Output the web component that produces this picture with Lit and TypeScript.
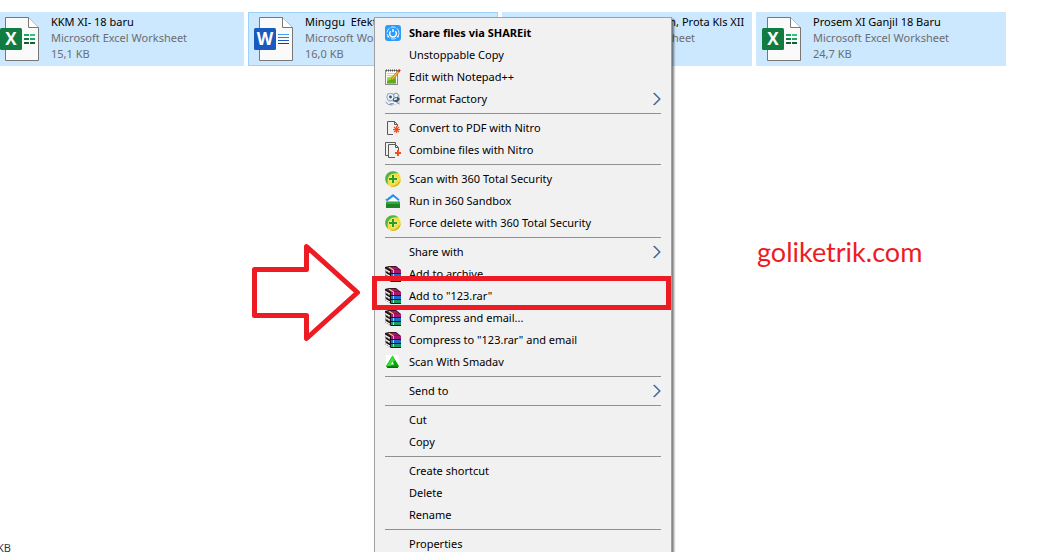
import { LitElement, html, css, svg, nothing } from "lit";
import { customElement, property } from "lit/decorators.js";

type IconName =
  | "shareit" | "notepad" | "factory" | "pdf" | "combine"
  | "security" | "sandbox" | "rar" | "smadav";

interface Entry {
  label: string;
  icon?: IconName;
  bold?: boolean;
  submenu?: boolean;
  marked?: boolean;
}

const groups: Entry[][] = [
  [
    { label: "Share files via SHAREit", icon: "shareit", bold: true },
    { label: "Unstoppable Copy" },
    { label: "Edit with Notepad++", icon: "notepad" },
    { label: "Format Factory", icon: "factory", submenu: true },
  ],
  [
    { label: "Convert to PDF with Nitro", icon: "pdf" },
    { label: "Combine files with Nitro", icon: "combine" },
  ],
  [
    { label: "Scan with 360 Total Security", icon: "security" },
    { label: "Run in 360 Sandbox", icon: "sandbox" },
    { label: "Force delete with 360 Total Security", icon: "security" },
  ],
  [
    { label: "Share with", submenu: true },
    { label: "Add to archive...", icon: "rar" },
    { label: 'Add to "123.rar"', icon: "rar", marked: true },
    { label: "Compress and email...", icon: "rar" },
    { label: 'Compress to "123.rar" and email', icon: "rar" },
    { label: "Scan With Smadav", icon: "smadav" },
  ],
  [{ label: "Send to", submenu: true }],
  [{ label: "Cut" }, { label: "Copy" }],
  [{ label: "Create shortcut" }, { label: "Delete" }, { label: "Rename" }],
  [{ label: "Properties" }],
];

const glyphs: Record<IconName, unknown> = {
  shareit: svg`
    <rect width="16" height="16" rx="3" fill="#2e9bfa"/>
    <circle cx="8" cy="8" r="6" fill="none" stroke="#d4ecff" stroke-width="1" stroke-dasharray="5 1.3"/>
    <path d="M5.6 6.2a3.4 3.4 0 1 0 4.8 0M8 4v3" fill="none" stroke="#fff" stroke-width="1.4"/>
    <path d="M2 10.5l2.4.6-1.6 1.7zM14 10.5l-2.4.6 1.6 1.7z" fill="#fff"/>`,
  notepad: svg`
    <rect x=".5" y="1.5" width="12" height="14" fill="#fbfbf4" stroke="#8b8b86"/>
    <path d="M1 1.500h11.500" stroke="#555" stroke-width="2" stroke-dasharray="1 1"/>
    <path d="M2 4.500h9M2 6.500h9" stroke="#ccd0c8"/>
    <path d="M2 8.500l9-2v8H2z" fill="#9ed32c"/>
    <path d="M2 12l9-3v5.500H2z" fill="#5fae1c"/>
    <path d="M6.500 11.500l.5-3L13 1.500l1.500 1.200-6 7.500z" fill="#f0b83a" stroke="#8a5a14" stroke-width=".5"/>
    <path d="M12.500 2l1.500-2 1.800 1.300L14.300 3.300z" fill="#d03030"/>`,
  factory: svg`
    <path d="M2 2h9l4 2v8l-4 2H3z" fill="#ccd6e0"/>
    <circle cx="5.500" cy="6" r="3.700" fill="#edf4fa" stroke="#93a4b6"/>
    <circle cx="5.500" cy="6" r="1.400" fill="#36506e"/>
    <circle cx="11" cy="4.500" r="2.300" fill="#e9f1f8" stroke="#8496a8"/>
    <path d="M8 7.500l5-1.500 2 2-3 3.500-4-1.500z" fill="#3d566f"/>
    <path d="M9 8.500l3-.8M2 12.500l5-1 6 1.500" stroke="#f6fafd" stroke-width="1.600"/>
    <path d="M.5 11l3 2.500 4 .500M12 12l2.500 1" stroke="#7d90a4" fill="none"/>`,
  pdf: svg`
    <path d="M8 14.500H2.500v-13h7l3 3v2M9.500 1.500v3h3" fill="none" stroke="#5a5a5a"/>
    <path d="M11.500 6v7M8 9.500h7M9 7l5 5M14 7l-5 5" stroke="#f0501e" stroke-width="1.200"/>`,
  combine: svg`
    <path d="M3 13.500H.5V.5h10v2" fill="none" stroke="#5a5a5a"/>
    <path d="M10 15.500H3.500v-13h7l3 3v2.500M10.500 2.500v3h3" fill="none" stroke="#5a5a5a"/>
    <path d="M13 8v6M10 11h6" stroke="#f0501e" stroke-width="2"/>`,
  security: svg`
    <circle cx="8" cy="8" r="7.800" fill="#f6dc3c"/>
    <path d="M.2 8A7.800 7.800 0 0 1 13.500 2.500Q6 1.500 3.500 6 2 9 3 14A7.800 7.800 0 0 1 .2 8z" fill="#4cb648"/>
    <path d="M15.800 8.500A7.800 7.800 0 0 1 5 15.200Q12 15.500 15.800 8.500z" fill="#c7b524"/>
    <path d="M8 3.500v9M3.500 8h9" stroke="#e8f4a0" stroke-width="3"/>
    <path d="M8 4v8M4 8h8" stroke="#2b9a35" stroke-width="2"/>`,
  sandbox: svg`
    <path d="M2 8L8 3l6 5z" fill="#fff"/>
    <path d="M0 7L8 1l1.500 1.800L2.500 8zM8 1l6.500 5.500-1 1.500L7.500 3z" fill="#2489f0"/>
    <path d="M2 5.800l6-4.500" stroke="#9fd0ff" stroke-dasharray="1 1"/>
    <rect x="1" y="8" width="14" height="7" fill="#35a83c"/>
    <rect x="1" y="11" width="14" height="4" fill="#1d8428"/>
    <path d="M1 8.500h14" stroke="#86d67e"/>`,
  rar: svg`
    <path d="M4 0h7l5 4v12H6l-6-4v-1l1-1-1-1V7l1-1-1-1V1z" fill="#1a1216"/>
    <path d="M1.500 1.500L4 .8h6.500l4.500 3H6z" fill="#a5186e"/>
    <path d="M4 1.200l4.500 2.800" stroke="#f0d43a" stroke-width="1.300"/>
    <path d="M0 2.500l5 3v2l-5-3zM0 6.500l5 3v2l-5-3zM0 10.500l5 3v2l-5-3z" fill="#fff"/>
    <path d="M0 3.800l5 3M0 7.800l5 3M0 11.800l5 3" stroke="#555" stroke-width=".700" stroke-dasharray="1.200 1"/>
    <path d="M6 4h10v3H6z" fill="#a8186e"/>
    <path d="M6 8h10v3H6z" fill="#1c6cd0"/>
    <path d="M6 12h10v3H6z" fill="#189a62"/>
    <path d="M8.500 4v3M8.500 8v3M8.500 12v3" stroke="#f0d43a"/>`,
  smadav: svg`
    <rect x="1" y="1" width="13" height="13" fill="#fff"/>
    <path d="M7.500 1.500L14 12l-1.500 2h-10L1 12z" fill="#0ea30e"/>
    <path d="M7.500 2L10 6 5.500 12H1.500z" fill="#35e035"/>
    <path d="M7.500 7.500L9 10.500h-3z" fill="#fff"/>
    <path d="M1.500 12.500h12l-1 1.500h-10z" fill="#067006"/>`,
};

@customElement("file-tile")
class FileTile extends LitElement {
  @property() name = "";
  @property() kind: "Excel" | "Word" = "Excel";
  @property() size = "";

  static styles = css`
    :host {
      display: flex;
      gap: 6px;
      padding: 1px 2px 3px;
      background: #cce8ff;
      border: 1px solid #cce8ff;
      overflow: hidden;
      white-space: nowrap;
      color: #6d6d6d;
    }
    :host([focused]) {
      border-color: #99d1ff;
    }
    svg {
      flex: none;
      display: block;
    }
    .name {
      color: #000;
      white-space: pre;
    }
    .badge {
      font: bold 17px "Open Sans", "Noto Sans", sans-serif;
      fill: #fff;
      text-anchor: middle;
    }
  `;

  render() {
    const excel = this.kind === "Excel";
    return html`
      <svg width="48" height="48" viewBox="0 0 48 48" aria-hidden="true">
        <path d="M8.500 3.500h23l10 10v33h-33z" fill="#fafafa" stroke="#797774" stroke-linejoin="round"/>
        <path d="M31.500 3.500v10h10" fill="#fff" stroke="#797774"/>
        ${excel
          ? svg`
            <path d="M27 21h5" stroke="#21a366" stroke-width="2"/>
            <path d="M33 21h5" stroke="#33c481" stroke-width="2"/>
            <path d="M27 25h5" stroke="#107c41" stroke-width="2"/>
            <path d="M33 25h5" stroke="#21a366" stroke-width="2"/>
            <path d="M27 29h5M33 29h5" stroke="#185c37" stroke-width="2"/>`
          : svg`
            <path d="M27 20.500h11" stroke="#41a5ee"/>
            <path d="M27 23.500h11" stroke="#2b7cd3"/>
            <path d="M27 26.500h11" stroke="#185abd"/>
            <path d="M27 29.500h11" stroke="#103f91"/>`}
        <rect x="3" y="14" width="22" height="22" rx="1.500" fill=${excel ? "#107c41" : "#185abd"}/>
        <text class="badge" x="14" y="31">${excel ? "X" : "W"}</text>
      </svg>
      <div>
        <div class="name">${this.name}</div>
        <div>Microsoft ${this.kind} ${excel ? "Worksheet" : "Document"}</div>
        <div>${this.size}</div>
      </div>
    `;
  }
}

@customElement("context-menu")
class ContextMenu extends LitElement {
  static styles = css`
    :host {
      display: block;
      box-sizing: border-box;
      padding: 4px 0;
      background: #f1f1f1;
      border: 1px solid #a0a0a0;
      box-shadow: 2px 2px 2px rgba(0, 0, 0, 0.5);
    }
    button {
      position: relative;
      display: flex;
      align-items: center;
      gap: 8px;
      width: 100%;
      height: 22px;
      padding: 0 10px;
      border: 0;
      background: none;
      color: #000;
      font: inherit;
      text-align: left;
    }
    .bold {
      font-weight: bold;
    }
    .icon {
      flex: none;
      width: 16px;
      height: 16px;
    }
    .label {
      flex: 1;
      white-space: nowrap;
    }
    hr {
      height: 1px;
      margin: 3px 10px;
      border: 0;
      background: #919191;
    }
    .marked::after {
      content: "";
      position: absolute;
      z-index: 1;
      inset: -9px 0 -3px -3px;
      border: 5px solid #ed1c24;
    }
  `;

  private row(e: Entry) {
    return html`
      <button role="menuitem" class="${e.bold ? "bold" : ""} ${e.marked ? "marked" : ""}">
        <svg class="icon" viewBox="0 0 16 16" aria-hidden="true">${e.icon ? glyphs[e.icon] : nothing}</svg>
        <span class="label">${e.label}</span>
        ${e.submenu
          ? html`<svg width="8" height="14" viewBox="0 0 8 14" aria-hidden="true">
              <path d="M1.200 1l6 6-6 6" fill="none" stroke="#4aa6f0" stroke-width="1.200"/>
              <path d="M.5 1l6 6-6 6" fill="none" stroke="#4a2a34"/>
            </svg>`
          : nothing}
      </button>
    `;
  }

  render() {
    return groups.map(
      (g, i) => html`${i ? html`<hr />` : nothing}${g.map((e) => this.row(e))}`
    );
  }
}

@customElement("app-root")
class AppRoot extends LitElement {
  static styles = css`
    :host {
      display: flex;
      flex-direction: column;
      position: relative;
      box-sizing: border-box;
      height: 100vh;
      padding-top: 12px;
      overflow: hidden;
      background: #fff;
      font: 11px/16px "Noto Sans", "Open Sans", sans-serif;
    }
    .files {
      display: grid;
      grid-template-columns: repeat(4, 250px);
      gap: 4px;
      margin-left: -6px;
    }
    .status {
      margin-top: auto;
      margin-left: -3px;
      line-height: 8px;
      color: #1e395b;
    }
    context-menu {
      position: absolute;
      left: 374px;
      top: 17px;
      width: 298px;
    }
    .arrow {
      position: absolute;
      left: 250px;
      top: 242px;
    }
    .watermark {
      position: absolute;
      left: 757px;
      top: 236px;
      font: 27px/32px Lato, sans-serif;
      color: #ed1c24;
    }
  `;

  render() {
    return html`
      <div class="files">
        <file-tile name="KKM XI- 18 baru" size="15,1 KB"></file-tile>
        <file-tile focused name="Minggu  Efektif" kind="Word" size="16,0 KB"></file-tile>
        <file-tile name="Silabus, KKM, Program, Prota Kls XII" size="24,7 KB"></file-tile>
        <file-tile name="Prosem XI Ganjil 18 Baru" size="24,7 KB"></file-tile>
      </div>
      <div class="status">KB</div>
      <svg class="arrow" width="112" height="102" viewBox="250 242 112 102" aria-hidden="true">
        <path d="M254.500 269.500h52v-23l51 46-51 46v-23h-52z" fill="none" stroke="#ed1c24" stroke-width="5" stroke-linejoin="round"/>
      </svg>
      <div class="watermark">goliketrik.com</div>
      <context-menu role="menu"></context-menu>
    `;
  }
}
